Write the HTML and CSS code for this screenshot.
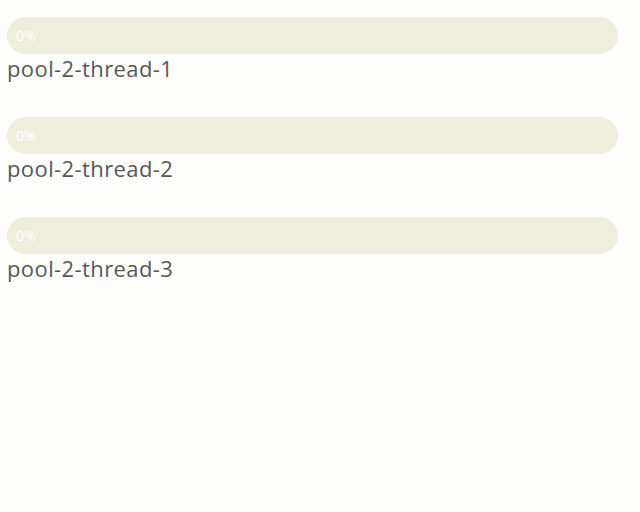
FILE: index.html
```html
<!DOCTYPE html>
<html>
<head>
<meta charset="utf-8">
<link rel="stylesheet" href="styles.css">
</head>
<body>
<div class="list">
  <div class="item">
    <div class="bar"><span class="pct">0%</span></div>
    <div class="label">pool-2-thread-1</div>
  </div>
  <div class="item">
    <div class="bar"><span class="pct">0%</span></div>
    <div class="label">pool-2-thread-2</div>
  </div>
  <div class="item">
    <div class="bar"><span class="pct">0%</span></div>
    <div class="label">pool-2-thread-3</div>
  </div>
</div>
</body>
</html>
```
FILE: styles.css
```css
html, body {
  margin: 0;
  padding: 0;
  background: #fdfdfb;
}
.list {
  padding: 17px 22px 0 7px;
  display: flex;
  flex-direction: column;
  gap: 35px;
}
.item {
  display: flex;
  flex-direction: column;
}
.bar {
  height: 37px;
  border-radius: 19px;
  background: #efeedc;
  display: flex;
  align-items: center;
  padding-left: 9px;
}
.pct {
  color: #ffffff;
  font-family: "Open Sans", sans-serif;
  font-size: 14px;
}
.label {
  font-family: "Open Sans", sans-serif;
  font-size: 22px;
  letter-spacing: 0.4px;
  line-height: 28px;
  color: #585858;
}
```
